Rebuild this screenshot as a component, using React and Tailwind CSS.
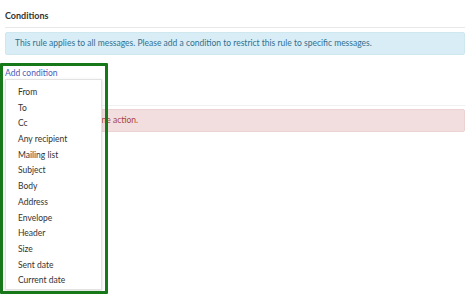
import React from 'react';

const fields = [
  'From',
  'To',
  'Cc',
  'Any recipient',
  'Mailing list',
  'Subject',
  'Body',
  'Address',
  'Envelope',
  'Header',
  'Size',
  'Sent date',
  'Current date',
];

const App = () => {
  return (
    <div
      className="relative w-[474px] h-[294px] overflow-hidden bg-white px-[5px] text-[8.5px] text-[#333]"
      style={{ fontFamily: 'Lato, "Open Sans", sans-serif' }}
    >
      {/* Header */}
      <div className="pt-[10px] pb-[5px] border-b border-[#e8e8e8] mr-[4px]">
        <h3 className="text-[9px] font-bold leading-[12px]">Conditions</h3>
      </div>

      {/* Info */}
      <div className="mt-[4px] mr-[4px] h-[23px] flex items-center px-[9px] rounded-[2px] border border-[#cfe8f0] bg-[#d9edf7] text-[#31708f]">
        This rule applies to all messages. Please add a condition to restrict this rule to specific messages.
      </div>

      {/* Add condition */}
      <div className="relative mt-[12px]">
        <a href="#" className="leading-[12px] text-[#4a5ab8]">Add condition</a>

        {/* Menu */}
        <div className="absolute left-0 top-[12px] w-[97px] h-[211px] z-10 bg-white border border-[#e2e2e2] shadow-[0_1px_3px_rgba(0,0,0,0.15)] pt-[5px]">
          {fields.map((f) => (
            <div key={f} className="h-[15.7px] leading-[15px] pl-[12px] whitespace-nowrap">
              {f}
            </div>
          ))}
        </div>
      </div>

      {/* Actions */}
      <div className="mt-[25px] mr-[4px] border-t border-[#eef2f2]" />
      <div className="mt-[3px] mr-[4px] h-[23px] flex items-center px-[9px] rounded-[2px] border border-[#ebd3d3] bg-[#f2dede] text-[#a94442]">
        You must add at least one action.
      </div>

      {/* Highlight frame */}
      <div className="absolute left-0 top-[63px] w-[108px] h-[231px] z-20 border-[3px] border-[#17781a] rounded-[1px] pointer-events-none" />
    </div>
  );
};

export default App;
